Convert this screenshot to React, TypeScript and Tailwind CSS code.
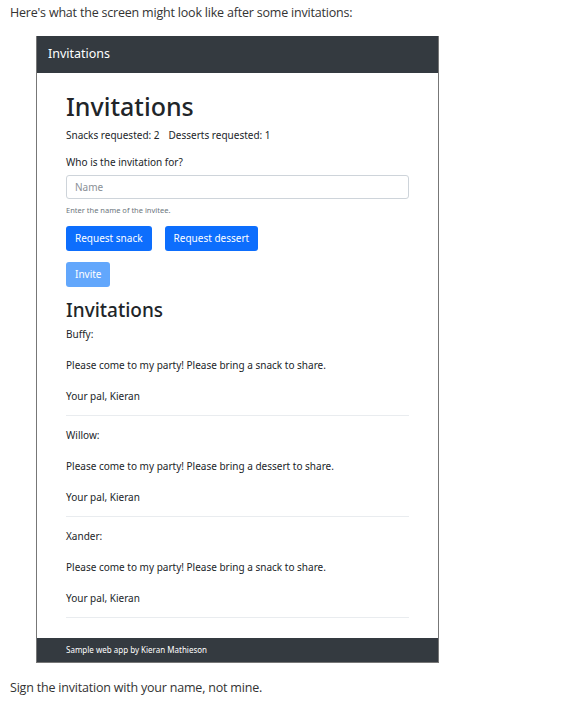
const invitations = [
  { name: 'Buffy', item: 'snack' },
  { name: 'Willow', item: 'dessert' },
  { name: 'Xander', item: 'snack' },
];

const ui = { fontFamily: '"Noto Sans", "Open Sans", sans-serif' };

export default function App() {
  return (
    <div className="bg-white text-[#333] min-h-screen" style={{ fontFamily: '"Open Sans", Lato, sans-serif' }}>
      <p className="pl-[10px] pt-[3px] text-[12.5px] leading-[20px] tracking-[-0.2px]">
        Here's what the screen might look like after some invitations:
      </p>

      <div className="ml-[36px] mt-[13px] w-[403px] border-x border-b border-[#777] bg-white text-[#212529]" style={ui}>
        <div className="bg-[#343a40] h-[37px] flex items-center px-[11px] text-white text-[12.5px]">Invitations</div>

        <div className="px-[29px] pt-[16px]">
          <h1 className="text-[25px] leading-[34px] font-medium">Invitations</h1>
          <p className="text-[10px] leading-[14px] mt-[5px] flex gap-[9px]">
            <span>Snacks requested: 2</span>
            <span>Desserts requested: 1</span>
          </p>

          <p className="text-[10px] leading-[14px] mt-[13px]">Who is the invitation for?</p>
          <div className="mt-[6px] h-[24px] border border-[#ced4da] rounded-[3px] flex items-center px-[8px] text-[10px] text-[#8a9096]">
            Name
          </div>
          <p className="text-[7.5px] leading-[12px] text-[#6c757d] mt-[5px]">Enter the name of the invitee.</p>

          <div className="flex gap-[13px] mt-[10px]">
            <button className="h-[25px] px-[9px] rounded-[3px] bg-[#0d6efd] text-white text-[10px]">Request snack</button>
            <button className="h-[25px] px-[9px] rounded-[3px] bg-[#0d6efd] text-white text-[10px]">Request dessert</button>
          </div>
          <button className="block mt-[11px] h-[25px] px-[9px] rounded-[3px] bg-[#62a7fc] text-white text-[10px]">Invite</button>

          <h2 className="text-[19px] leading-[24px] font-medium mt-[11px]">Invitations</h2>
          <div className="mt-[2px] pb-[11px]">
            {invitations.map((inv) => (
              <div key={inv.name} className="border-b border-[#e9ecef] text-[10px] leading-[20px] pb-[9px] mb-[9px]">
                <p>{inv.name}:</p>
                <p className="mt-[11px]">Please come to my party! Please bring a {inv.item} to share.</p>
                <p className="mt-[11px]">Your pal, Kieran</p>
              </div>
            ))}
          </div>
        </div>

        <div className="bg-[#343a40] h-[24px] flex items-center px-[29px] text-white text-[8px]">
          Sample web app by Kieran Mathieson
        </div>
      </div>

      <p className="pl-[10px] mt-[15px] text-[12.5px] leading-[20px] tracking-[-0.2px]">
        Sign the invitation with your name, not mine.
      </p>
    </div>
  );
}
